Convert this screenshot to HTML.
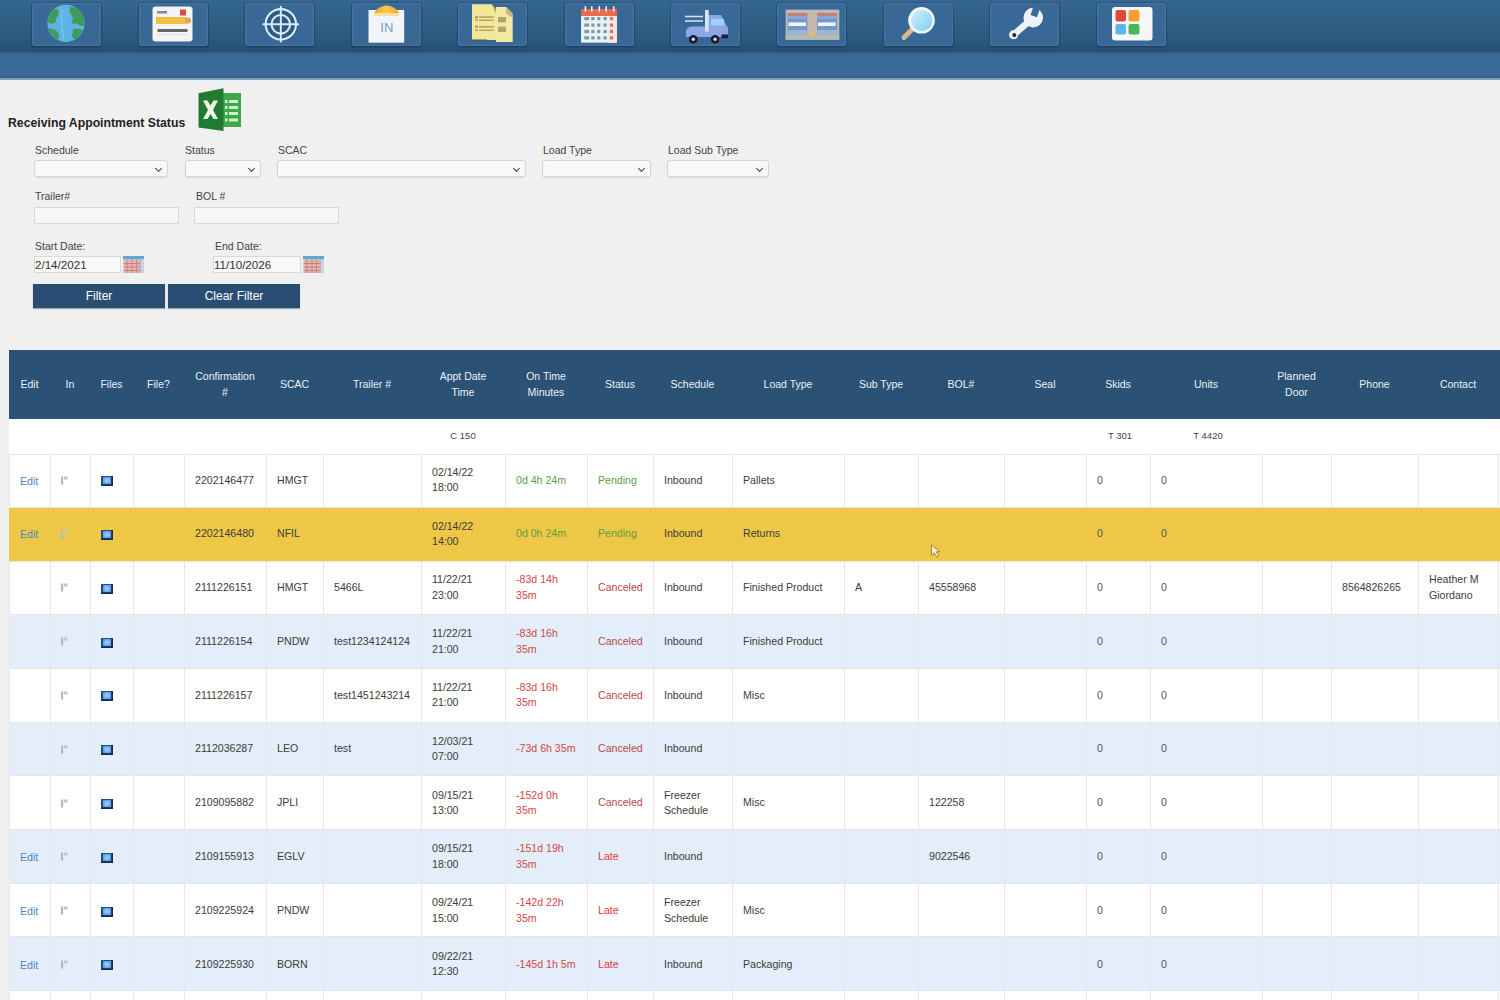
<!DOCTYPE html>
<html><head><meta charset="utf-8"><style>
*{margin:0;padding:0;box-sizing:border-box}
html,body{width:1500px;height:1000px;overflow:hidden;background:#f0f0f0;font-family:"Liberation Sans",sans-serif;color:#333}
.abs{position:absolute}
#top{position:absolute;left:0;top:0;width:1500px;height:52px;background:linear-gradient(#35678f,#2a577e 80%,#28506f)}
#band{position:absolute;left:0;top:52px;width:1500px;height:25px;background:linear-gradient(#325e86,#3a6b97 15%,#3b6c98 85%,#36648c)}
#bline{position:absolute;left:0;top:77px;width:1500px;height:3px;background:linear-gradient(#2f5a7c 0,#2f5a7c 33%,#7aa0bc 33%,#7ca2be)}
#bline2{position:absolute;left:0;top:80px;width:1500px;height:4px;background:linear-gradient(#e6f0fa,#f0f0f0)}
.nb{position:absolute;top:3px;width:69px;height:43px;background:#386896;border-radius:2px;box-shadow:0 0 0 1px rgba(20,50,80,.35),inset 0 0 0 1.5px rgba(120,160,200,.18),0 2px 2px rgba(20,40,70,.25)}
.nb svg{position:absolute;left:0;top:0}
.lbl{position:absolute;font-size:10.5px;color:#444}
.sel{position:absolute;height:17px;background:#f8f8f8;border:1px solid #d4d4d4;border-radius:3px;box-shadow:0 1px 1px rgba(0,0,0,.08)}
.sel:after{content:"";position:absolute;right:6px;top:5px;width:4px;height:4px;border-right:1.5px solid #444;border-bottom:1.5px solid #444;transform:rotate(45deg)}
.inp{position:absolute;height:17px;background:#f6f6f6;border:1px solid #d8d8d8}
.btn{position:absolute;top:284px;height:24px;background:#2a4e73;color:#fff;font-size:12px;text-align:center;line-height:24px;box-shadow:0 1px 1px rgba(0,0,0,.3)}
#thead{position:absolute;left:9px;top:350px;width:1491px;height:69px;background:#2b5175}
.th{position:absolute;top:350px;height:69px;display:flex;align-items:center;justify-content:center;text-align:center;color:#eaf0f6;font-size:10.5px;line-height:15.5px}
#sum{position:absolute;left:9px;top:419px;width:1491px;height:35.6px;background:#fff;border-bottom:1px solid #e4e4e4}
.sm{position:absolute;top:430px;font-size:9.5px;color:#444;text-align:center}
.row{position:absolute;left:9px;width:1491px;border-bottom:1px solid #e2e6ea}
.vl{position:absolute;width:1px;background:#e4e8ec}
.td{position:absolute;display:flex;align-items:center;font-size:10.6px;line-height:15.5px;color:#3c3c3c;padding-left:11px;padding-bottom:2px}
.g{color:#5c9e48}.r{color:#d24848}.l{color:#e23a3a}.cn{color:#b84848}
.ed{color:#4a86c4;position:relative;top:1px}.z{color:#555}
.fic{width:12px;height:10px;background:#1f4f86;position:relative;top:1px;box-shadow:inset -1.5px -1.5px 0 #142c50}
.fic div{position:absolute;left:2px;top:1px;width:8px;height:7px;background:radial-gradient(#a8d4ff,#4a8ad8)}
#wrap{position:absolute;left:0;top:0;width:1500px;height:1000px}
</style></head><body><div id="wrap">
<div id="top"></div><div id="band"></div><div id="bline"></div><div id="bline2"></div>

<div class="nb" style="left:32px"><svg width="69" height="43"><defs><clipPath id="gc"><circle cx="34" cy="20.3" r="18.3"/></clipPath></defs>
<circle cx="34" cy="20.3" r="18.6" fill="#5ab8c8"/>
<circle cx="34" cy="20.3" r="18" fill="#5cb4e4"/>
<g clip-path="url(#gc)" fill="#3f9c56">
<path d="M14 6 H25 Q28 9 26 13 Q23 15 24 19 L20 21 Q17 19 14 20 Z"/>
<path d="M14 25 Q19 25 23 27 Q27 29 27 34 Q26 38 22 40 H14 Z"/>
<path d="M38 4 Q46 3 53 10 V22 Q50 24 47 22 Q44 19 41 21 L39 19 Q42 16 40 13 Q37 10 38 4 Z"/>
<path d="M41 26 Q46 25 51 27 Q50 33 46 36 Q41 37 40 33 Q41 30 41 26 Z"/>
</g>
<path d="M30 6 Q28 20 32 36" stroke="#7ccaf0" stroke-width="2" fill="none" opacity=".6"/></svg></div>
<div class="nb" style="left:139px"><svg width="69" height="43"><rect x="13.5" y="3.5" width="40" height="35" rx="3" fill="#f4f4f6"/>
<rect x="18" y="8" width="10" height="2.5" fill="#8a8a8a"/><rect x="41" y="6.5" width="6" height="6" fill="#d05040"/>
<rect x="17" y="14" width="31" height="7" fill="#f0c040"/><circle cx="49" cy="17.5" r="3" fill="#e0a070"/>
<rect x="18.5" y="26" width="30" height="3" fill="#666"/><rect x="18" y="31" width="30" height="1" fill="#ddd"/></svg></div>
<div class="nb" style="left:245px"><svg width="69" height="43"><circle cx="35.8" cy="21.3" r="15.2" fill="#2f5882"/><g stroke="#d8ecff" fill="none" stroke-width="2.1"><circle cx="35.8" cy="21.3" r="15.2"/><circle cx="35.8" cy="21.3" r="9.3"/></g>
<g stroke="#d8ecff" stroke-width="1.9"><line x1="35.8" y1="3" x2="35.8" y2="39.5"/><line x1="17.5" y1="21.3" x2="54" y2="21.3"/></g></svg></div>
<div class="nb" style="left:352px"><svg width="69" height="43"><defs><linearGradient id="clg" x1="0" x2="1"><stop offset="0" stop-color="#e8a030"/><stop offset=".5" stop-color="#f6cc50"/><stop offset="1" stop-color="#e8a030"/></linearGradient></defs>
<rect x="16.5" y="7" width="35.7" height="32.7" fill="#f2f4f8"/>
<path d="M22 11 Q24 5 30 3.5 Q34.5 1.5 39 3.5 Q45 5 47.5 11 Z" fill="url(#clg)"/><rect x="22" y="10" width="25.5" height="3" fill="#f8e0a0"/>
<text x="34.8" y="29" font-family="Liberation Sans" font-size="13" fill="#6f9fcc" text-anchor="middle">IN</text></svg></div>
<div class="nb" style="left:458px"><svg width="69" height="43"><path d="M14 1.3 H33.6 L38.9 6.6 V37 H14 Z" fill="#f2e699"/><path d="M33.6 1.3 L38.9 6.6 L38.9 11.9 Z" fill="#8a8050" opacity=".7"/>
<path d="M38 3.9 H48 L54.7 10.6 V39.1 H38 Z" fill="#f4e9a2"/><path d="M48 3.9 V10.6 H54.7 Z" fill="#c9b874"/><path d="M48 10.6 L54.7 10.6 L54.7 14.6 Z" fill="#9a9060" opacity=".6"/>
<rect x="14" y="36" width="15" height="2" fill="#4a5a40" opacity=".5"/>
<g fill="#b0a468"><rect x="17" y="13" width="3" height="2.5"/><rect x="21" y="13.3" width="14.7" height="1.6"/><rect x="17" y="16.5" width="3" height="1.5"/><rect x="21" y="16.6" width="14.7" height="1.4"/>
<rect x="17" y="22.6" width="3" height="2.5"/><rect x="21" y="23" width="14.7" height="1.6"/><rect x="17" y="26.5" width="3" height="1.5"/><rect x="21" y="26.6" width="14.7" height="1.4"/>
<rect x="40" y="14" width="8" height="5.4"/><rect x="40" y="23.7" width="8" height="5.3"/></g></svg></div>
<div class="nb" style="left:565px"><svg width="69" height="43"><rect x="16.1" y="6" width="35.8" height="7" fill="#e86a50"/><rect x="16.1" y="13" width="35.8" height="26.7" fill="#e6f4f8"/>
<rect x="43.3" y="13" width="8.6" height="26.7" fill="#fbe4de"/>
<g fill="#f4f4f4"><rect x="19.599999999999998" y="2.9" width="1.6" height="5.8" rx=".8"/><rect x="26.0" y="2.9" width="1.6" height="5.8" rx=".8"/><rect x="33.5" y="2.9" width="1.6" height="5.8" rx=".8"/><rect x="40.400000000000006" y="2.9" width="1.6" height="5.8" rx=".8"/><rect x="47.900000000000006" y="2.9" width="1.6" height="5.8" rx=".8"/></g>
<g fill="#84969c"><rect x="19.3" y="14" width="4.8" height="3.2"/><rect x="26.3" y="14" width="3.2" height="3.2"/><rect x="32.1" y="14" width="3.2" height="3.2"/><rect x="38.5" y="14" width="3.2" height="3.2"/><rect x="19.3" y="20.5" width="4.8" height="3.2"/><rect x="26.3" y="20.5" width="3.2" height="3.2"/><rect x="32.1" y="20.5" width="3.2" height="3.2"/><rect x="38.5" y="20.5" width="3.2" height="3.2"/><rect x="19.3" y="26.9" width="4.8" height="3.2"/><rect x="26.3" y="26.9" width="3.2" height="3.2"/><rect x="32.1" y="26.9" width="3.2" height="3.2"/><rect x="38.5" y="26.9" width="3.2" height="3.2"/><rect x="19.3" y="33.3" width="4.8" height="3.2"/><rect x="26.3" y="33.3" width="3.2" height="3.2"/><rect x="32.1" y="33.3" width="3.2" height="3.2"/><rect x="38.5" y="33.3" width="3.2" height="3.2"/></g><g fill="#b08478"><rect x="44.9" y="14" width="3.2" height="3.2"/><rect x="44.9" y="20.5" width="3.2" height="3.2"/><rect x="44.9" y="26.9" width="3.2" height="3.2"/><rect x="44.9" y="33.3" width="3.2" height="3.2"/></g></svg></div>
<div class="nb" style="left:671px"><svg width="69" height="43"><path d="M15 35 V29 Q15 23.5 22 23.5 H34 V12 H50 L57 25 V34 H15 Z" fill="#8ea6e6"/>
<rect x="40" y="16" width="13" height="6.5" fill="#9ad4fa"/><rect x="34" y="7" width="3.7" height="21.5" fill="#d6e4fa"/>
<rect x="50.5" y="31.5" width="6.5" height="3.7" fill="#1a2040"/>
<g stroke="#d0e0f8" stroke-width="1.6"><line x1="14" y1="13.5" x2="32" y2="13.5"/><line x1="14" y1="18" x2="32" y2="18"/></g>
<circle cx="22.3" cy="36.3" r="4.3" fill="#1a1a2a"/><circle cx="22.3" cy="36.3" r="1.7" fill="#ddd"/>
<circle cx="44.1" cy="36.3" r="4.3" fill="#1a1a2a"/><circle cx="44.1" cy="36.3" r="1.7" fill="#ddd"/></svg></div>
<div class="nb" style="left:777px"><svg width="69" height="43"><rect x="8.7" y="6.6" width="53.6" height="30.1" fill="#bcbcb4"/>
<rect x="10.6" y="10.3" width="19.7" height="21.4" fill="#7896c8"/><rect x="40" y="10.3" width="20.2" height="21.4" fill="#7896c8"/>
<rect x="10.6" y="10.3" width="19.7" height="2.4" fill="#e07060"/><rect x="40" y="10.3" width="20.2" height="2.4" fill="#e07060"/>
<rect x="10.6" y="12.7" width="19.7" height="3" fill="#8aa8d8"/><rect x="40" y="12.7" width="20.2" height="3" fill="#8aa8d8"/>
<rect x="11.5" y="19.4" width="17.5" height="3.6" fill="#eef8ff"/><rect x="41" y="19.4" width="17.5" height="3.6" fill="#eef8ff"/>
<rect x="10.6" y="27" width="19.7" height="4.7" fill="#9cb4d4"/><rect x="40" y="27" width="20.2" height="4.7" fill="#9cb4d4"/>
<rect x="31" y="10.3" width="8.5" height="22" fill="#c4b8b0"/><rect x="8.7" y="31.7" width="53.6" height="5" fill="#b4bab0"/><rect x="32" y="29" width="6" height="4" fill="#e0c070"/></svg></div>
<div class="nb" style="left:884px"><svg width="69" height="43"><defs><linearGradient id="mgg" x1="0" y1="0" x2="1" y2="1"><stop offset="0" stop-color="#d6eef8"/><stop offset="1" stop-color="#7cd0f4"/></linearGradient></defs>
<line x1="20" y1="34.5" x2="28" y2="26.5" stroke="#d8b890" stroke-width="5" stroke-linecap="round"/>
<circle cx="37.5" cy="17.3" r="13.3" fill="#f2f6fa"/><circle cx="37.8" cy="17.6" r="10.6" fill="url(#mgg)"/></svg></div>
<div class="nb" style="left:990px"><svg width="69" height="43"><g transform="translate(23.6,31.7) rotate(49)">
<rect x="-3.3" y="-24" width="6.6" height="24" fill="#eef2f8"/><circle cx="0" cy="0" r="4.6" fill="#eef2f8"/>
<circle cx="0" cy="-26" r="9.8" fill="#eef2f8"/><g transform="translate(0,-26) rotate(-30)"><rect x="-3.4" y="-14" width="6.8" height="12.5" fill="#386896"/></g>
<circle cx="0.8" cy="-0.3" r="2" fill="#2a2a30"/></g></svg></div>
<div class="nb" style="left:1097px"><svg width="69" height="43"><rect x="15" y="4" width="40.5" height="33.5" rx="3" fill="#f4f6f8"/>
<rect x="18.5" y="7" width="10.5" height="11.5" rx="2" fill="#e04838"/><rect x="31.5" y="7" width="11" height="11.5" rx="2" fill="#f4a030"/>
<rect x="18.5" y="21" width="10.5" height="10.5" rx="2" fill="#58b8e8"/><rect x="31.5" y="21" width="11" height="10.5" rx="2" fill="#48b858"/></svg></div>
<div class="abs" style="left:8px;top:116px;font-size:12.25px;font-weight:bold;color:#222;white-space:nowrap">Receiving Appointment Status</div>
<svg class="abs" style="left:197px;top:87px" width="46" height="46" viewBox="0 0 46 46">
<rect x="25" y="6" width="19" height="34" fill="#3ea84a"/>
<g fill="#c8f5c8"><rect x="28" y="13" width="2.5" height="3"/><rect x="32" y="13" width="9" height="3"/><rect x="28" y="19" width="2.5" height="3"/><rect x="32" y="19" width="9" height="3"/><rect x="28" y="25" width="2.5" height="3"/><rect x="32" y="25" width="9" height="3"/><rect x="28" y="31.5" width="2.5" height="3"/><rect x="32" y="31.5" width="9" height="3"/></g>
<path d="M1.5 6.3 L26.5 1.2 L26.5 44 L1.5 40.4 Z" fill="#227a32"/>
<path d="M6 13.5 H10.5 L13.5 18.5 L16.5 13.5 H21 L16 23 L21 32 H16.5 L13.5 27 L10.5 32 H6 L11 23 Z" fill="#e8fbe8"/>
</svg>
<div class="lbl" style="left:35px;top:144px">Schedule</div>
<div class="sel" style="left:34px;top:160px;width:134px"></div>
<div class="lbl" style="left:185px;top:144px">Status</div>
<div class="sel" style="left:185px;top:160px;width:76px"></div>
<div class="lbl" style="left:278px;top:144px">SCAC</div>
<div class="sel" style="left:277px;top:160px;width:249px"></div>
<div class="lbl" style="left:543px;top:144px">Load Type</div>
<div class="sel" style="left:542px;top:160px;width:109px"></div>
<div class="lbl" style="left:668px;top:144px">Load Sub Type</div>
<div class="sel" style="left:667px;top:160px;width:102px"></div>
<div class="lbl" style="left:35px;top:190px">Trailer#</div>
<div class="inp" style="left:34px;top:207px;width:145px"></div>
<div class="lbl" style="left:196px;top:190px">BOL #</div>
<div class="inp" style="left:194px;top:207px;width:145px"></div>
<div class="lbl" style="left:35px;top:240px">Start Date:</div>
<div class="inp" style="left:34px;top:256px;width:87px;background:#f8f8f8;font-size:11.6px;color:#333;line-height:16px;padding-left:0">2/14/2021</div>
<div class="lbl" style="left:215px;top:240px">End Date:</div>
<div class="inp" style="left:213px;top:256px;width:88px;background:#f8f8f8;font-size:11.6px;color:#333;line-height:16px;padding-left:0">11/10/2026</div>
<div class="abs" style="left:123px;top:256px"><svg width="22" height="18"><rect x="0" y="0" width="21" height="3.5" fill="#5aaad4"/><rect x="0.5" y="3.5" width="20" height="13.5" fill="#f0b0a8"/>
<g fill="#b88890"><rect x="0.5" y="7" width="20" height="1"/><rect x="0.5" y="10.5" width="20" height="1"/><rect x="0.5" y="14" width="20" height="1"/>
<rect x="3.5" y="3.5" width="1" height="13.5"/><rect x="8.5" y="3.5" width="1" height="13.5"/><rect x="13" y="3.5" width="1" height="13.5"/><rect x="17" y="3.5" width="1" height="13.5"/></g>
<rect x="17.5" y="3.5" width="3" height="13.5" fill="#c8d4e8"/></svg></div>
<div class="abs" style="left:303px;top:256px"><svg width="22" height="18"><rect x="0" y="0" width="21" height="3.5" fill="#5aaad4"/><rect x="0.5" y="3.5" width="20" height="13.5" fill="#f0b0a8"/>
<g fill="#b88890"><rect x="0.5" y="7" width="20" height="1"/><rect x="0.5" y="10.5" width="20" height="1"/><rect x="0.5" y="14" width="20" height="1"/>
<rect x="3.5" y="3.5" width="1" height="13.5"/><rect x="8.5" y="3.5" width="1" height="13.5"/><rect x="13" y="3.5" width="1" height="13.5"/><rect x="17" y="3.5" width="1" height="13.5"/></g>
<rect x="17.5" y="3.5" width="3" height="13.5" fill="#c8d4e8"/></svg></div>
<div class="btn" style="left:33px;width:132px">Filter</div>
<div class="btn" style="left:168px;width:132px">Clear Filter</div>
<div id="thead"></div>
<div class="th" style="left:9px;width:41px">Edit</div>
<div class="th" style="left:50px;width:40px">In</div>
<div class="th" style="left:90px;width:43px">Files</div>
<div class="th" style="left:133px;width:51px">File?</div>
<div class="th" style="left:184px;width:82px">Confirmation<br>#</div>
<div class="th" style="left:266px;width:57px">SCAC</div>
<div class="th" style="left:323px;width:98px">Trailer #</div>
<div class="th" style="left:421px;width:84px">Appt Date<br>Time</div>
<div class="th" style="left:505px;width:82px">On Time<br>Minutes</div>
<div class="th" style="left:587px;width:66px">Status</div>
<div class="th" style="left:653px;width:79px">Schedule</div>
<div class="th" style="left:732px;width:112px">Load Type</div>
<div class="th" style="left:844px;width:74px">Sub Type</div>
<div class="th" style="left:918px;width:86px">BOL#</div>
<div class="th" style="left:1004px;width:82px">Seal</div>
<div class="th" style="left:1086px;width:64px">Skids</div>
<div class="th" style="left:1150px;width:112px">Units</div>
<div class="th" style="left:1262px;width:69px">Planned<br>Door</div>
<div class="th" style="left:1331px;width:87px">Phone</div>
<div class="th" style="left:1418px;width:80px">Contact</div>
<div id="sum"></div>
<div class="sm" style="left:421px;width:84px">C 150</div>
<div class="sm" style="left:1088px;width:64px">T 301</div>
<div class="sm" style="left:1152px;width:112px">T 4420</div>
<div class="row" style="top:454.6px;height:53.6px;background:#ffffff"></div>
<div class="vl" style="left:50px;top:454.6px;height:53.6px"></div>
<div class="vl" style="left:90px;top:454.6px;height:53.6px"></div>
<div class="vl" style="left:133px;top:454.6px;height:53.6px"></div>
<div class="vl" style="left:184px;top:454.6px;height:53.6px"></div>
<div class="vl" style="left:266px;top:454.6px;height:53.6px"></div>
<div class="vl" style="left:323px;top:454.6px;height:53.6px"></div>
<div class="vl" style="left:421px;top:454.6px;height:53.6px"></div>
<div class="vl" style="left:505px;top:454.6px;height:53.6px"></div>
<div class="vl" style="left:587px;top:454.6px;height:53.6px"></div>
<div class="vl" style="left:653px;top:454.6px;height:53.6px"></div>
<div class="vl" style="left:732px;top:454.6px;height:53.6px"></div>
<div class="vl" style="left:844px;top:454.6px;height:53.6px"></div>
<div class="vl" style="left:918px;top:454.6px;height:53.6px"></div>
<div class="vl" style="left:1004px;top:454.6px;height:53.6px"></div>
<div class="vl" style="left:1086px;top:454.6px;height:53.6px"></div>
<div class="vl" style="left:1150px;top:454.6px;height:53.6px"></div>
<div class="vl" style="left:1262px;top:454.6px;height:53.6px"></div>
<div class="vl" style="left:1331px;top:454.6px;height:53.6px"></div>
<div class="vl" style="left:1418px;top:454.6px;height:53.6px"></div>
<div class="vl" style="left:1498px;top:454.6px;height:53.6px"></div>
<div class="vl" style="left:9px;top:454.6px;height:53.6px"></div>
<div class="td" style="left:9px;top:454.60px;width:41px;height:53.6px"><span class="ed">Edit</span></div>
<div class="td" style="left:50px;top:454.60px;width:40px;height:53.6px"><svg width="8" height="9" viewBox="0 0 8 9" style="display:block"><rect x="0" y="0.5" width="2.2" height="8" fill="#a8bcd2"/><rect x="3" y="0.5" width="3.5" height="3" fill="#b8c8da"/></svg></div>
<div class="td" style="left:90px;top:454.60px;width:43px;height:53.6px"><div class="fic"><div></div></div></div>
<div class="td" style="left:184px;top:454.60px;width:82px;height:53.6px">2202146477</div>
<div class="td" style="left:266px;top:454.60px;width:57px;height:53.6px">HMGT</div>
<div class="td" style="left:421px;top:454.60px;width:84px;height:53.6px">02/14/22<br>18:00</div>
<div class="td" style="left:505px;top:454.60px;width:82px;height:53.6px"><span class="g">0d 4h 24m</span></div>
<div class="td" style="left:587px;top:454.60px;width:66px;height:53.6px"><span class="g">Pending</span></div>
<div class="td" style="left:653px;top:454.60px;width:79px;height:53.6px">Inbound</div>
<div class="td" style="left:732px;top:454.60px;width:112px;height:53.6px">Pallets</div>
<div class="td" style="left:1086px;top:454.60px;width:64px;height:53.6px"><span class="z">0</span></div>
<div class="td" style="left:1150px;top:454.60px;width:112px;height:53.6px"><span class="z">0</span></div>
<div class="row" style="top:508.2px;height:53.6px;background:#efc746"></div>
<div class="td" style="left:9px;top:508.37px;width:41px;height:53.6px"><span class="ed">Edit</span></div>
<div class="td" style="left:50px;top:508.37px;width:40px;height:53.6px"><svg width="8" height="9" viewBox="0 0 8 9" style="display:block"><rect x="0" y="0.5" width="2.2" height="8" fill="#a8bcd2"/><rect x="3" y="0.5" width="3.5" height="3" fill="#b8c8da"/></svg></div>
<div class="td" style="left:90px;top:508.37px;width:43px;height:53.6px"><div class="fic"><div></div></div></div>
<div class="td" style="left:184px;top:508.37px;width:82px;height:53.6px">2202146480</div>
<div class="td" style="left:266px;top:508.37px;width:57px;height:53.6px">NFIL</div>
<div class="td" style="left:421px;top:508.37px;width:84px;height:53.6px">02/14/22<br>14:00</div>
<div class="td" style="left:505px;top:508.37px;width:82px;height:53.6px"><span class="g">0d 0h 24m</span></div>
<div class="td" style="left:587px;top:508.37px;width:66px;height:53.6px"><span class="g">Pending</span></div>
<div class="td" style="left:653px;top:508.37px;width:79px;height:53.6px">Inbound</div>
<div class="td" style="left:732px;top:508.37px;width:112px;height:53.6px">Returns</div>
<div class="td" style="left:1086px;top:508.37px;width:64px;height:53.6px"><span class="z">0</span></div>
<div class="td" style="left:1150px;top:508.37px;width:112px;height:53.6px"><span class="z">0</span></div>
<div class="row" style="top:561.9px;height:53.6px;background:#ffffff"></div>
<div class="vl" style="left:50px;top:561.9px;height:53.6px"></div>
<div class="vl" style="left:90px;top:561.9px;height:53.6px"></div>
<div class="vl" style="left:133px;top:561.9px;height:53.6px"></div>
<div class="vl" style="left:184px;top:561.9px;height:53.6px"></div>
<div class="vl" style="left:266px;top:561.9px;height:53.6px"></div>
<div class="vl" style="left:323px;top:561.9px;height:53.6px"></div>
<div class="vl" style="left:421px;top:561.9px;height:53.6px"></div>
<div class="vl" style="left:505px;top:561.9px;height:53.6px"></div>
<div class="vl" style="left:587px;top:561.9px;height:53.6px"></div>
<div class="vl" style="left:653px;top:561.9px;height:53.6px"></div>
<div class="vl" style="left:732px;top:561.9px;height:53.6px"></div>
<div class="vl" style="left:844px;top:561.9px;height:53.6px"></div>
<div class="vl" style="left:918px;top:561.9px;height:53.6px"></div>
<div class="vl" style="left:1004px;top:561.9px;height:53.6px"></div>
<div class="vl" style="left:1086px;top:561.9px;height:53.6px"></div>
<div class="vl" style="left:1150px;top:561.9px;height:53.6px"></div>
<div class="vl" style="left:1262px;top:561.9px;height:53.6px"></div>
<div class="vl" style="left:1331px;top:561.9px;height:53.6px"></div>
<div class="vl" style="left:1418px;top:561.9px;height:53.6px"></div>
<div class="vl" style="left:1498px;top:561.9px;height:53.6px"></div>
<div class="vl" style="left:9px;top:561.9px;height:53.6px"></div>
<div class="td" style="left:50px;top:562.14px;width:40px;height:53.6px"><svg width="8" height="9" viewBox="0 0 8 9" style="display:block"><rect x="0" y="0.5" width="2.2" height="8" fill="#a8bcd2"/><rect x="3" y="0.5" width="3.5" height="3" fill="#b8c8da"/></svg></div>
<div class="td" style="left:90px;top:562.14px;width:43px;height:53.6px"><div class="fic"><div></div></div></div>
<div class="td" style="left:184px;top:562.14px;width:82px;height:53.6px">2111226151</div>
<div class="td" style="left:266px;top:562.14px;width:57px;height:53.6px">HMGT</div>
<div class="td" style="left:323px;top:562.14px;width:98px;height:53.6px">5466L</div>
<div class="td" style="left:421px;top:562.14px;width:84px;height:53.6px">11/22/21<br>23:00</div>
<div class="td" style="left:505px;top:562.14px;width:82px;height:53.6px"><span class="r">-83d 14h<br>35m</span></div>
<div class="td" style="left:587px;top:562.14px;width:66px;height:53.6px"><span class="cn">Canceled</span></div>
<div class="td" style="left:653px;top:562.14px;width:79px;height:53.6px">Inbound</div>
<div class="td" style="left:732px;top:562.14px;width:112px;height:53.6px">Finished Product</div>
<div class="td" style="left:844px;top:562.14px;width:74px;height:53.6px">A</div>
<div class="td" style="left:918px;top:562.14px;width:86px;height:53.6px">45558968</div>
<div class="td" style="left:1086px;top:562.14px;width:64px;height:53.6px"><span class="z">0</span></div>
<div class="td" style="left:1150px;top:562.14px;width:112px;height:53.6px"><span class="z">0</span></div>
<div class="td" style="left:1331px;top:562.14px;width:87px;height:53.6px">8564826265</div>
<div class="td" style="left:1418px;top:562.14px;width:80px;height:53.6px">Heather M<br>Giordano</div>
<div class="row" style="top:615.5px;height:53.6px;background:#e3eefa"></div>
<div class="vl" style="left:50px;top:615.5px;height:53.6px"></div>
<div class="vl" style="left:90px;top:615.5px;height:53.6px"></div>
<div class="vl" style="left:133px;top:615.5px;height:53.6px"></div>
<div class="vl" style="left:184px;top:615.5px;height:53.6px"></div>
<div class="vl" style="left:266px;top:615.5px;height:53.6px"></div>
<div class="vl" style="left:323px;top:615.5px;height:53.6px"></div>
<div class="vl" style="left:421px;top:615.5px;height:53.6px"></div>
<div class="vl" style="left:505px;top:615.5px;height:53.6px"></div>
<div class="vl" style="left:587px;top:615.5px;height:53.6px"></div>
<div class="vl" style="left:653px;top:615.5px;height:53.6px"></div>
<div class="vl" style="left:732px;top:615.5px;height:53.6px"></div>
<div class="vl" style="left:844px;top:615.5px;height:53.6px"></div>
<div class="vl" style="left:918px;top:615.5px;height:53.6px"></div>
<div class="vl" style="left:1004px;top:615.5px;height:53.6px"></div>
<div class="vl" style="left:1086px;top:615.5px;height:53.6px"></div>
<div class="vl" style="left:1150px;top:615.5px;height:53.6px"></div>
<div class="vl" style="left:1262px;top:615.5px;height:53.6px"></div>
<div class="vl" style="left:1331px;top:615.5px;height:53.6px"></div>
<div class="vl" style="left:1418px;top:615.5px;height:53.6px"></div>
<div class="vl" style="left:1498px;top:615.5px;height:53.6px"></div>
<div class="vl" style="left:9px;top:615.5px;height:53.6px"></div>
<div class="td" style="left:50px;top:615.91px;width:40px;height:53.6px"><svg width="8" height="9" viewBox="0 0 8 9" style="display:block"><rect x="0" y="0.5" width="2.2" height="8" fill="#a8bcd2"/><rect x="3" y="0.5" width="3.5" height="3" fill="#b8c8da"/></svg></div>
<div class="td" style="left:90px;top:615.91px;width:43px;height:53.6px"><div class="fic"><div></div></div></div>
<div class="td" style="left:184px;top:615.91px;width:82px;height:53.6px">2111226154</div>
<div class="td" style="left:266px;top:615.91px;width:57px;height:53.6px">PNDW</div>
<div class="td" style="left:323px;top:615.91px;width:98px;height:53.6px">test1234124124</div>
<div class="td" style="left:421px;top:615.91px;width:84px;height:53.6px">11/22/21<br>21:00</div>
<div class="td" style="left:505px;top:615.91px;width:82px;height:53.6px"><span class="r">-83d 16h<br>35m</span></div>
<div class="td" style="left:587px;top:615.91px;width:66px;height:53.6px"><span class="cn">Canceled</span></div>
<div class="td" style="left:653px;top:615.91px;width:79px;height:53.6px">Inbound</div>
<div class="td" style="left:732px;top:615.91px;width:112px;height:53.6px">Finished Product</div>
<div class="td" style="left:1086px;top:615.91px;width:64px;height:53.6px"><span class="z">0</span></div>
<div class="td" style="left:1150px;top:615.91px;width:112px;height:53.6px"><span class="z">0</span></div>
<div class="row" style="top:669.1px;height:53.6px;background:#ffffff"></div>
<div class="vl" style="left:50px;top:669.1px;height:53.6px"></div>
<div class="vl" style="left:90px;top:669.1px;height:53.6px"></div>
<div class="vl" style="left:133px;top:669.1px;height:53.6px"></div>
<div class="vl" style="left:184px;top:669.1px;height:53.6px"></div>
<div class="vl" style="left:266px;top:669.1px;height:53.6px"></div>
<div class="vl" style="left:323px;top:669.1px;height:53.6px"></div>
<div class="vl" style="left:421px;top:669.1px;height:53.6px"></div>
<div class="vl" style="left:505px;top:669.1px;height:53.6px"></div>
<div class="vl" style="left:587px;top:669.1px;height:53.6px"></div>
<div class="vl" style="left:653px;top:669.1px;height:53.6px"></div>
<div class="vl" style="left:732px;top:669.1px;height:53.6px"></div>
<div class="vl" style="left:844px;top:669.1px;height:53.6px"></div>
<div class="vl" style="left:918px;top:669.1px;height:53.6px"></div>
<div class="vl" style="left:1004px;top:669.1px;height:53.6px"></div>
<div class="vl" style="left:1086px;top:669.1px;height:53.6px"></div>
<div class="vl" style="left:1150px;top:669.1px;height:53.6px"></div>
<div class="vl" style="left:1262px;top:669.1px;height:53.6px"></div>
<div class="vl" style="left:1331px;top:669.1px;height:53.6px"></div>
<div class="vl" style="left:1418px;top:669.1px;height:53.6px"></div>
<div class="vl" style="left:1498px;top:669.1px;height:53.6px"></div>
<div class="vl" style="left:9px;top:669.1px;height:53.6px"></div>
<div class="td" style="left:50px;top:669.68px;width:40px;height:53.6px"><svg width="8" height="9" viewBox="0 0 8 9" style="display:block"><rect x="0" y="0.5" width="2.2" height="8" fill="#a8bcd2"/><rect x="3" y="0.5" width="3.5" height="3" fill="#b8c8da"/></svg></div>
<div class="td" style="left:90px;top:669.68px;width:43px;height:53.6px"><div class="fic"><div></div></div></div>
<div class="td" style="left:184px;top:669.68px;width:82px;height:53.6px">2111226157</div>
<div class="td" style="left:323px;top:669.68px;width:98px;height:53.6px">test1451243214</div>
<div class="td" style="left:421px;top:669.68px;width:84px;height:53.6px">11/22/21<br>21:00</div>
<div class="td" style="left:505px;top:669.68px;width:82px;height:53.6px"><span class="r">-83d 16h<br>35m</span></div>
<div class="td" style="left:587px;top:669.68px;width:66px;height:53.6px"><span class="cn">Canceled</span></div>
<div class="td" style="left:653px;top:669.68px;width:79px;height:53.6px">Inbound</div>
<div class="td" style="left:732px;top:669.68px;width:112px;height:53.6px">Misc</div>
<div class="td" style="left:1086px;top:669.68px;width:64px;height:53.6px"><span class="z">0</span></div>
<div class="td" style="left:1150px;top:669.68px;width:112px;height:53.6px"><span class="z">0</span></div>
<div class="row" style="top:722.8px;height:53.6px;background:#e3eefa"></div>
<div class="vl" style="left:50px;top:722.8px;height:53.6px"></div>
<div class="vl" style="left:90px;top:722.8px;height:53.6px"></div>
<div class="vl" style="left:133px;top:722.8px;height:53.6px"></div>
<div class="vl" style="left:184px;top:722.8px;height:53.6px"></div>
<div class="vl" style="left:266px;top:722.8px;height:53.6px"></div>
<div class="vl" style="left:323px;top:722.8px;height:53.6px"></div>
<div class="vl" style="left:421px;top:722.8px;height:53.6px"></div>
<div class="vl" style="left:505px;top:722.8px;height:53.6px"></div>
<div class="vl" style="left:587px;top:722.8px;height:53.6px"></div>
<div class="vl" style="left:653px;top:722.8px;height:53.6px"></div>
<div class="vl" style="left:732px;top:722.8px;height:53.6px"></div>
<div class="vl" style="left:844px;top:722.8px;height:53.6px"></div>
<div class="vl" style="left:918px;top:722.8px;height:53.6px"></div>
<div class="vl" style="left:1004px;top:722.8px;height:53.6px"></div>
<div class="vl" style="left:1086px;top:722.8px;height:53.6px"></div>
<div class="vl" style="left:1150px;top:722.8px;height:53.6px"></div>
<div class="vl" style="left:1262px;top:722.8px;height:53.6px"></div>
<div class="vl" style="left:1331px;top:722.8px;height:53.6px"></div>
<div class="vl" style="left:1418px;top:722.8px;height:53.6px"></div>
<div class="vl" style="left:1498px;top:722.8px;height:53.6px"></div>
<div class="vl" style="left:9px;top:722.8px;height:53.6px"></div>
<div class="td" style="left:50px;top:723.45px;width:40px;height:53.6px"><svg width="8" height="9" viewBox="0 0 8 9" style="display:block"><rect x="0" y="0.5" width="2.2" height="8" fill="#a8bcd2"/><rect x="3" y="0.5" width="3.5" height="3" fill="#b8c8da"/></svg></div>
<div class="td" style="left:90px;top:723.45px;width:43px;height:53.6px"><div class="fic"><div></div></div></div>
<div class="td" style="left:184px;top:723.45px;width:82px;height:53.6px">2112036287</div>
<div class="td" style="left:266px;top:723.45px;width:57px;height:53.6px">LEO</div>
<div class="td" style="left:323px;top:723.45px;width:98px;height:53.6px">test</div>
<div class="td" style="left:421px;top:723.45px;width:84px;height:53.6px">12/03/21<br>07:00</div>
<div class="td" style="left:505px;top:723.45px;width:82px;height:53.6px"><span class="r">-73d 6h 35m</span></div>
<div class="td" style="left:587px;top:723.45px;width:66px;height:53.6px"><span class="cn">Canceled</span></div>
<div class="td" style="left:653px;top:723.45px;width:79px;height:53.6px">Inbound</div>
<div class="td" style="left:1086px;top:723.45px;width:64px;height:53.6px"><span class="z">0</span></div>
<div class="td" style="left:1150px;top:723.45px;width:112px;height:53.6px"><span class="z">0</span></div>
<div class="row" style="top:776.4px;height:53.6px;background:#ffffff"></div>
<div class="vl" style="left:50px;top:776.4px;height:53.6px"></div>
<div class="vl" style="left:90px;top:776.4px;height:53.6px"></div>
<div class="vl" style="left:133px;top:776.4px;height:53.6px"></div>
<div class="vl" style="left:184px;top:776.4px;height:53.6px"></div>
<div class="vl" style="left:266px;top:776.4px;height:53.6px"></div>
<div class="vl" style="left:323px;top:776.4px;height:53.6px"></div>
<div class="vl" style="left:421px;top:776.4px;height:53.6px"></div>
<div class="vl" style="left:505px;top:776.4px;height:53.6px"></div>
<div class="vl" style="left:587px;top:776.4px;height:53.6px"></div>
<div class="vl" style="left:653px;top:776.4px;height:53.6px"></div>
<div class="vl" style="left:732px;top:776.4px;height:53.6px"></div>
<div class="vl" style="left:844px;top:776.4px;height:53.6px"></div>
<div class="vl" style="left:918px;top:776.4px;height:53.6px"></div>
<div class="vl" style="left:1004px;top:776.4px;height:53.6px"></div>
<div class="vl" style="left:1086px;top:776.4px;height:53.6px"></div>
<div class="vl" style="left:1150px;top:776.4px;height:53.6px"></div>
<div class="vl" style="left:1262px;top:776.4px;height:53.6px"></div>
<div class="vl" style="left:1331px;top:776.4px;height:53.6px"></div>
<div class="vl" style="left:1418px;top:776.4px;height:53.6px"></div>
<div class="vl" style="left:1498px;top:776.4px;height:53.6px"></div>
<div class="vl" style="left:9px;top:776.4px;height:53.6px"></div>
<div class="td" style="left:50px;top:777.22px;width:40px;height:53.6px"><svg width="8" height="9" viewBox="0 0 8 9" style="display:block"><rect x="0" y="0.5" width="2.2" height="8" fill="#a8bcd2"/><rect x="3" y="0.5" width="3.5" height="3" fill="#b8c8da"/></svg></div>
<div class="td" style="left:90px;top:777.22px;width:43px;height:53.6px"><div class="fic"><div></div></div></div>
<div class="td" style="left:184px;top:777.22px;width:82px;height:53.6px">2109095882</div>
<div class="td" style="left:266px;top:777.22px;width:57px;height:53.6px">JPLI</div>
<div class="td" style="left:421px;top:777.22px;width:84px;height:53.6px">09/15/21<br>13:00</div>
<div class="td" style="left:505px;top:777.22px;width:82px;height:53.6px"><span class="r">-152d 0h<br>35m</span></div>
<div class="td" style="left:587px;top:777.22px;width:66px;height:53.6px"><span class="cn">Canceled</span></div>
<div class="td" style="left:653px;top:777.22px;width:79px;height:53.6px">Freezer<br>Schedule</div>
<div class="td" style="left:732px;top:777.22px;width:112px;height:53.6px">Misc</div>
<div class="td" style="left:918px;top:777.22px;width:86px;height:53.6px">122258</div>
<div class="td" style="left:1086px;top:777.22px;width:64px;height:53.6px"><span class="z">0</span></div>
<div class="td" style="left:1150px;top:777.22px;width:112px;height:53.6px"><span class="z">0</span></div>
<div class="row" style="top:830.0px;height:53.6px;background:#e3eefa"></div>
<div class="vl" style="left:50px;top:830.0px;height:53.6px"></div>
<div class="vl" style="left:90px;top:830.0px;height:53.6px"></div>
<div class="vl" style="left:133px;top:830.0px;height:53.6px"></div>
<div class="vl" style="left:184px;top:830.0px;height:53.6px"></div>
<div class="vl" style="left:266px;top:830.0px;height:53.6px"></div>
<div class="vl" style="left:323px;top:830.0px;height:53.6px"></div>
<div class="vl" style="left:421px;top:830.0px;height:53.6px"></div>
<div class="vl" style="left:505px;top:830.0px;height:53.6px"></div>
<div class="vl" style="left:587px;top:830.0px;height:53.6px"></div>
<div class="vl" style="left:653px;top:830.0px;height:53.6px"></div>
<div class="vl" style="left:732px;top:830.0px;height:53.6px"></div>
<div class="vl" style="left:844px;top:830.0px;height:53.6px"></div>
<div class="vl" style="left:918px;top:830.0px;height:53.6px"></div>
<div class="vl" style="left:1004px;top:830.0px;height:53.6px"></div>
<div class="vl" style="left:1086px;top:830.0px;height:53.6px"></div>
<div class="vl" style="left:1150px;top:830.0px;height:53.6px"></div>
<div class="vl" style="left:1262px;top:830.0px;height:53.6px"></div>
<div class="vl" style="left:1331px;top:830.0px;height:53.6px"></div>
<div class="vl" style="left:1418px;top:830.0px;height:53.6px"></div>
<div class="vl" style="left:1498px;top:830.0px;height:53.6px"></div>
<div class="vl" style="left:9px;top:830.0px;height:53.6px"></div>
<div class="td" style="left:9px;top:830.99px;width:41px;height:53.6px"><span class="ed">Edit</span></div>
<div class="td" style="left:50px;top:830.99px;width:40px;height:53.6px"><svg width="8" height="9" viewBox="0 0 8 9" style="display:block"><rect x="0" y="0.5" width="2.2" height="8" fill="#a8bcd2"/><rect x="3" y="0.5" width="3.5" height="3" fill="#b8c8da"/></svg></div>
<div class="td" style="left:90px;top:830.99px;width:43px;height:53.6px"><div class="fic"><div></div></div></div>
<div class="td" style="left:184px;top:830.99px;width:82px;height:53.6px">2109155913</div>
<div class="td" style="left:266px;top:830.99px;width:57px;height:53.6px">EGLV</div>
<div class="td" style="left:421px;top:830.99px;width:84px;height:53.6px">09/15/21<br>18:00</div>
<div class="td" style="left:505px;top:830.99px;width:82px;height:53.6px"><span class="r">-151d 19h<br>35m</span></div>
<div class="td" style="left:587px;top:830.99px;width:66px;height:53.6px"><span class="l">Late</span></div>
<div class="td" style="left:653px;top:830.99px;width:79px;height:53.6px">Inbound</div>
<div class="td" style="left:918px;top:830.99px;width:86px;height:53.6px">9022546</div>
<div class="td" style="left:1086px;top:830.99px;width:64px;height:53.6px"><span class="z">0</span></div>
<div class="td" style="left:1150px;top:830.99px;width:112px;height:53.6px"><span class="z">0</span></div>
<div class="row" style="top:883.6px;height:53.6px;background:#ffffff"></div>
<div class="vl" style="left:50px;top:883.6px;height:53.6px"></div>
<div class="vl" style="left:90px;top:883.6px;height:53.6px"></div>
<div class="vl" style="left:133px;top:883.6px;height:53.6px"></div>
<div class="vl" style="left:184px;top:883.6px;height:53.6px"></div>
<div class="vl" style="left:266px;top:883.6px;height:53.6px"></div>
<div class="vl" style="left:323px;top:883.6px;height:53.6px"></div>
<div class="vl" style="left:421px;top:883.6px;height:53.6px"></div>
<div class="vl" style="left:505px;top:883.6px;height:53.6px"></div>
<div class="vl" style="left:587px;top:883.6px;height:53.6px"></div>
<div class="vl" style="left:653px;top:883.6px;height:53.6px"></div>
<div class="vl" style="left:732px;top:883.6px;height:53.6px"></div>
<div class="vl" style="left:844px;top:883.6px;height:53.6px"></div>
<div class="vl" style="left:918px;top:883.6px;height:53.6px"></div>
<div class="vl" style="left:1004px;top:883.6px;height:53.6px"></div>
<div class="vl" style="left:1086px;top:883.6px;height:53.6px"></div>
<div class="vl" style="left:1150px;top:883.6px;height:53.6px"></div>
<div class="vl" style="left:1262px;top:883.6px;height:53.6px"></div>
<div class="vl" style="left:1331px;top:883.6px;height:53.6px"></div>
<div class="vl" style="left:1418px;top:883.6px;height:53.6px"></div>
<div class="vl" style="left:1498px;top:883.6px;height:53.6px"></div>
<div class="vl" style="left:9px;top:883.6px;height:53.6px"></div>
<div class="td" style="left:9px;top:884.76px;width:41px;height:53.6px"><span class="ed">Edit</span></div>
<div class="td" style="left:50px;top:884.76px;width:40px;height:53.6px"><svg width="8" height="9" viewBox="0 0 8 9" style="display:block"><rect x="0" y="0.5" width="2.2" height="8" fill="#a8bcd2"/><rect x="3" y="0.5" width="3.5" height="3" fill="#b8c8da"/></svg></div>
<div class="td" style="left:90px;top:884.76px;width:43px;height:53.6px"><div class="fic"><div></div></div></div>
<div class="td" style="left:184px;top:884.76px;width:82px;height:53.6px">2109225924</div>
<div class="td" style="left:266px;top:884.76px;width:57px;height:53.6px">PNDW</div>
<div class="td" style="left:421px;top:884.76px;width:84px;height:53.6px">09/24/21<br>15:00</div>
<div class="td" style="left:505px;top:884.76px;width:82px;height:53.6px"><span class="r">-142d 22h<br>35m</span></div>
<div class="td" style="left:587px;top:884.76px;width:66px;height:53.6px"><span class="l">Late</span></div>
<div class="td" style="left:653px;top:884.76px;width:79px;height:53.6px">Freezer<br>Schedule</div>
<div class="td" style="left:732px;top:884.76px;width:112px;height:53.6px">Misc</div>
<div class="td" style="left:1086px;top:884.76px;width:64px;height:53.6px"><span class="z">0</span></div>
<div class="td" style="left:1150px;top:884.76px;width:112px;height:53.6px"><span class="z">0</span></div>
<div class="row" style="top:937.3px;height:53.6px;background:#e3eefa"></div>
<div class="vl" style="left:50px;top:937.3px;height:53.6px"></div>
<div class="vl" style="left:90px;top:937.3px;height:53.6px"></div>
<div class="vl" style="left:133px;top:937.3px;height:53.6px"></div>
<div class="vl" style="left:184px;top:937.3px;height:53.6px"></div>
<div class="vl" style="left:266px;top:937.3px;height:53.6px"></div>
<div class="vl" style="left:323px;top:937.3px;height:53.6px"></div>
<div class="vl" style="left:421px;top:937.3px;height:53.6px"></div>
<div class="vl" style="left:505px;top:937.3px;height:53.6px"></div>
<div class="vl" style="left:587px;top:937.3px;height:53.6px"></div>
<div class="vl" style="left:653px;top:937.3px;height:53.6px"></div>
<div class="vl" style="left:732px;top:937.3px;height:53.6px"></div>
<div class="vl" style="left:844px;top:937.3px;height:53.6px"></div>
<div class="vl" style="left:918px;top:937.3px;height:53.6px"></div>
<div class="vl" style="left:1004px;top:937.3px;height:53.6px"></div>
<div class="vl" style="left:1086px;top:937.3px;height:53.6px"></div>
<div class="vl" style="left:1150px;top:937.3px;height:53.6px"></div>
<div class="vl" style="left:1262px;top:937.3px;height:53.6px"></div>
<div class="vl" style="left:1331px;top:937.3px;height:53.6px"></div>
<div class="vl" style="left:1418px;top:937.3px;height:53.6px"></div>
<div class="vl" style="left:1498px;top:937.3px;height:53.6px"></div>
<div class="vl" style="left:9px;top:937.3px;height:53.6px"></div>
<div class="td" style="left:9px;top:938.53px;width:41px;height:53.6px"><span class="ed">Edit</span></div>
<div class="td" style="left:50px;top:938.53px;width:40px;height:53.6px"><svg width="8" height="9" viewBox="0 0 8 9" style="display:block"><rect x="0" y="0.5" width="2.2" height="8" fill="#a8bcd2"/><rect x="3" y="0.5" width="3.5" height="3" fill="#b8c8da"/></svg></div>
<div class="td" style="left:90px;top:938.53px;width:43px;height:53.6px"><div class="fic"><div></div></div></div>
<div class="td" style="left:184px;top:938.53px;width:82px;height:53.6px">2109225930</div>
<div class="td" style="left:266px;top:938.53px;width:57px;height:53.6px">BORN</div>
<div class="td" style="left:421px;top:938.53px;width:84px;height:53.6px">09/22/21<br>12:30</div>
<div class="td" style="left:505px;top:938.53px;width:82px;height:53.6px"><span class="r">-145d 1h 5m</span></div>
<div class="td" style="left:587px;top:938.53px;width:66px;height:53.6px"><span class="l">Late</span></div>
<div class="td" style="left:653px;top:938.53px;width:79px;height:53.6px">Inbound</div>
<div class="td" style="left:732px;top:938.53px;width:112px;height:53.6px">Packaging</div>
<div class="td" style="left:1086px;top:938.53px;width:64px;height:53.6px"><span class="z">0</span></div>
<div class="td" style="left:1150px;top:938.53px;width:112px;height:53.6px"><span class="z">0</span></div>
<div class="row" style="top:990.9px;height:53.6px;background:#ffffff"></div>
<div class="vl" style="left:50px;top:990.9px;height:53.6px"></div>
<div class="vl" style="left:90px;top:990.9px;height:53.6px"></div>
<div class="vl" style="left:133px;top:990.9px;height:53.6px"></div>
<div class="vl" style="left:184px;top:990.9px;height:53.6px"></div>
<div class="vl" style="left:266px;top:990.9px;height:53.6px"></div>
<div class="vl" style="left:323px;top:990.9px;height:53.6px"></div>
<div class="vl" style="left:421px;top:990.9px;height:53.6px"></div>
<div class="vl" style="left:505px;top:990.9px;height:53.6px"></div>
<div class="vl" style="left:587px;top:990.9px;height:53.6px"></div>
<div class="vl" style="left:653px;top:990.9px;height:53.6px"></div>
<div class="vl" style="left:732px;top:990.9px;height:53.6px"></div>
<div class="vl" style="left:844px;top:990.9px;height:53.6px"></div>
<div class="vl" style="left:918px;top:990.9px;height:53.6px"></div>
<div class="vl" style="left:1004px;top:990.9px;height:53.6px"></div>
<div class="vl" style="left:1086px;top:990.9px;height:53.6px"></div>
<div class="vl" style="left:1150px;top:990.9px;height:53.6px"></div>
<div class="vl" style="left:1262px;top:990.9px;height:53.6px"></div>
<div class="vl" style="left:1331px;top:990.9px;height:53.6px"></div>
<div class="vl" style="left:1418px;top:990.9px;height:53.6px"></div>
<div class="vl" style="left:1498px;top:990.9px;height:53.6px"></div>
<div class="vl" style="left:9px;top:990.9px;height:53.6px"></div>
<svg class="abs" style="left:930px;top:543px" width="12" height="16"><path d="M1.5 2 L1.5 12 L4.2 9.8 L6.5 14 L8.5 13 L6.3 8.8 L10 8.8 Z" fill="#fffbe6" stroke="#8a7438" stroke-width="0.9" opacity=".9"/></svg>
</div></body></html>
